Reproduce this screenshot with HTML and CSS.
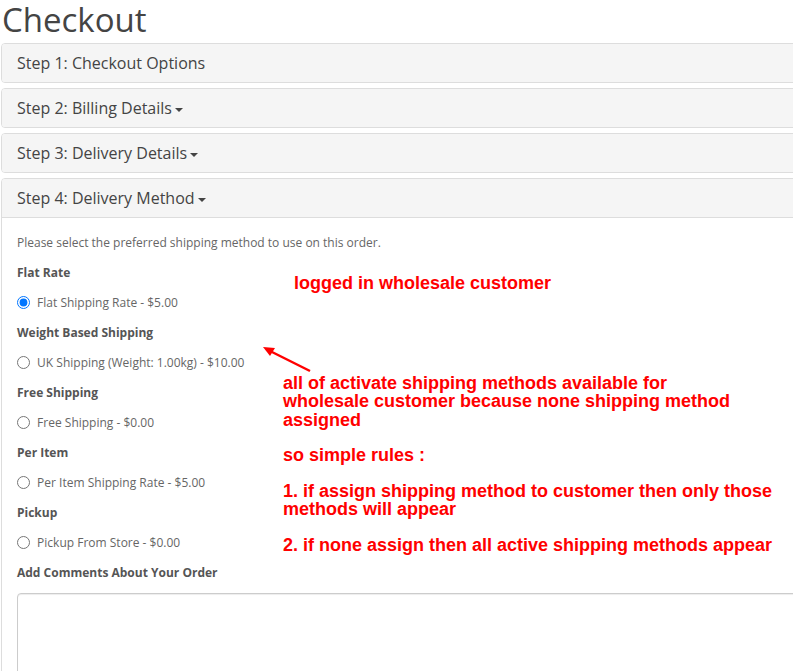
FILE: index.html
```html
<!DOCTYPE html>
<html lang="en">
<head>
    <meta charset="UTF-8">
    <meta name="viewport" content="width=device-width, initial-scale=1.0">
    <title>Checkout</title>
    <link rel="stylesheet" href="styles.css">
</head>
<body>
    <div class="page">
        <h1>Checkout</h1>
        <div class="panel">
            <div class="panel-heading">Step 1: Checkout Options</div>
        </div>
        <div class="panel">
            <div class="panel-heading">Step 2: Billing Details <span class="caret"></span></div>
        </div>
        <div class="panel">
            <div class="panel-heading">Step 3: Delivery Details <span class="caret"></span></div>
        </div>
        <div class="panel">
            <div class="panel-heading">Step 4: Delivery Method <span class="caret"></span></div>
            <div class="panel-body">
                <p>Please select the preferred shipping method to use on this order.</p>
                <p class="group">Flat Rate</p>
                <label class="radio"><input type="radio" name="shipping" checked> Flat Shipping Rate - $5.00</label>
                <p class="group">Weight Based Shipping</p>
                <label class="radio"><input type="radio" name="shipping"> UK Shipping (Weight: 1.00kg) - $10.00</label>
                <p class="group">Free Shipping</p>
                <label class="radio"><input type="radio" name="shipping"> Free Shipping - $0.00</label>
                <p class="group">Per Item</p>
                <label class="radio"><input type="radio" name="shipping"> Per Item Shipping Rate - $5.00</label>
                <p class="group">Pickup</p>
                <label class="radio"><input type="radio" name="shipping"> Pickup From Store - $0.00</label>
                <p class="group">Add Comments About Your Order</p>
                <textarea rows="8"></textarea>
            </div>
        </div>
    </div>

    <svg class="arrow" width="56" height="34" viewBox="0 0 56 34">
        <line x1="50" y1="28" x2="8" y2="7" stroke="#f00" stroke-width="2.5"/>
        <polygon points="3,4 15,5 10,13" fill="#f00"/>
    </svg>

    <div class="notes">
        <p class="first">logged in wholesale customer</p>
        <p>all of activate shipping methods available for<br>wholesale customer because none shipping method<br>assigned</p>
        <p>so simple rules :</p>
        <p>1. if assign shipping method to customer then only those<br>methods will appear</p>
        <p>2. if none assign then all active shipping methods appear</p>
    </div>
</body>
</html>
```

FILE: styles.css
```css
body {
    margin: 0;
    background: #fff;
    font-family: "Open Sans", sans-serif;
    color: #666;
    overflow: hidden;
    height: 671px;
}
.page {
    width: 840px;
    padding-left: 1px;
}
h1 {
    margin: 0 0 3px 1px;
    font-size: 33px;
    font-weight: 400;
    line-height: 40px;
    color: #444;
}
.panel {
    border: 1px solid #ddd;
    border-radius: 4px;
    margin-bottom: 5px;
    background: #fff;
}
.panel-heading {
    background: #f5f5f5;
    padding: 10px 15px;
    font-size: 16px;
    line-height: 18px;
    color: #444;
    border-radius: 3px 3px 0 0;
}
.panel:not(:last-child) .panel-heading {
    border-radius: 3px;
}
.panel-body {
    border-top: 1px solid #ddd;
    padding: 15px;
}
.caret {
    display: inline-block;
    width: 0;
    height: 0;
    margin-left: -1px;
    vertical-align: middle;
    border-top: 4px solid #444;
    border-left: 4px solid transparent;
    border-right: 4px solid transparent;
}
.panel-body p,
.radio {
    display: block;
    margin: 0 0 10px;
    font-size: 12px;
    line-height: 20px;
}
.panel-body .group {
    font-weight: 700;
    color: #555;
}
.radio input {
    margin: 0 4px 0 0;
    width: 13px;
    height: 13px;
    vertical-align: -2px;
}
textarea {
    display: block;
    width: 100%;
    height: 140px;
    border: 1px solid #ccc;
    border-radius: 4px;
    box-shadow: inset 0 1px 1px rgba(0, 0, 0, 0.075);
}
.notes {
    position: absolute;
    left: 283px;
    top: 274px;
    color: #f00;
    font-family: "Liberation Sans", Arial, sans-serif;
    font-weight: 700;
    font-size: 18px;
    line-height: 18.5px;
}
.notes p {
    margin: 0 0 17px;
}
.notes .first {
    margin: 0 0 81px 11px;
}
.arrow {
    position: absolute;
    left: 260px;
    top: 343px;
}
```
